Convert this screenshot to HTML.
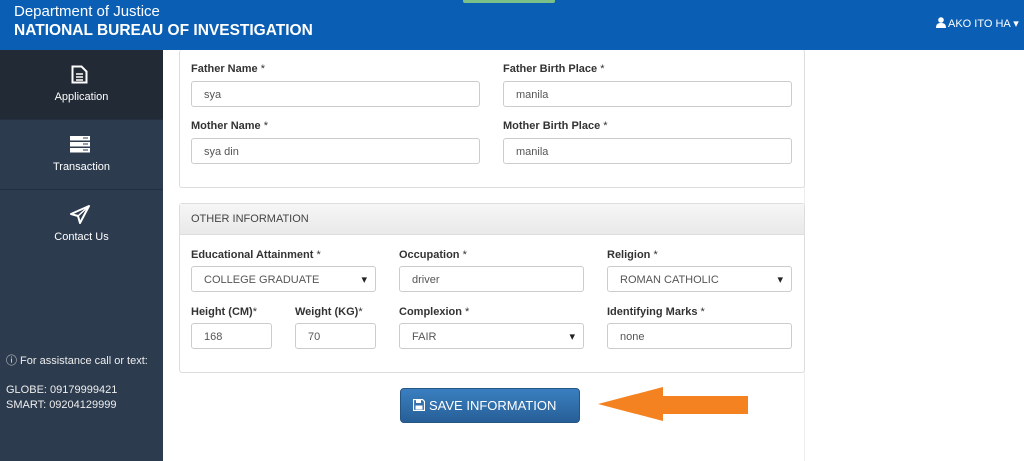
<!DOCTYPE html>
<html><head><style>
*{box-sizing:border-box;margin:0;padding:0}
body{width:1024px;height:461px;overflow:hidden;background:#fff;font-family:"Liberation Sans",Arial,sans-serif;position:relative}
.hdr{position:absolute;left:0;top:0;width:1024px;height:50px;background:#0a5fb5;color:#fff;z-index:5}
.a{position:absolute}
.side{position:absolute;left:0;top:50px;width:163px;height:411px;background:#2c3b4e;color:#fff}
.nav{position:absolute;left:0;width:163px;height:70px;text-align:center;font-size:11px;border-bottom:1px solid #24303f}
.lbl{position:absolute;font-size:11px;font-weight:bold;color:#333}
.inp{position:absolute;height:26px;border:1px solid #ccc;border-radius:3px;font-size:11px;color:#555;padding:7px 12px;background:#fff}
.sel::after{content:"▾";position:absolute;right:8px;top:6px;font-size:11px;color:#222}
.card{position:absolute;border:1px solid #ddd;border-radius:3px;background:#fff}
</style></head><body>
<div class="hdr">
<div class="a" style="left:14px;top:3px;font-size:15px">Department of Justice</div>
<div class="a" style="left:14px;top:22px;font-size:15.5px;font-weight:bold">NATIONAL BUREAU OF INVESTIGATION</div>
<div class="a" style="left:463px;top:0;width:92px;height:3px;background:#7cc089;border-radius:0 0 2px 2px"></div>
<svg class="a" style="left:936px;top:17px" width="10" height="11" viewBox="0 0 10 11"><circle cx="5" cy="3" r="2.8" fill="#fff"/><path d="M0 11C0 7 2 6 5 6S10 7 10 11z" fill="#fff"/></svg>
<div class="a" style="left:948px;top:17px;font-size:11px">AKO ITO HA ▾</div>
</div>
<div class="side">
<div class="nav" style="top:0;background:#222a35">
<svg class="a" style="left:71px;top:15px" width="17" height="19" viewBox="0 0 17 19"><path d="M1.5 1.5h9l5 5v11h-14z" fill="none" stroke="#fff" stroke-width="2"/><path d="M5 9h7M5 12h7M5 15h7" stroke="#fff" stroke-width="1.5"/></svg>
<div class="a" style="left:0;width:163px;top:41px">Application</div></div>
<div class="nav" style="top:70px">
<svg class="a" style="left:70px;top:16px" width="20" height="17" viewBox="0 0 20 17"><rect x="0" y="0" width="20" height="4.5" fill="#fff"/><rect x="0" y="6" width="20" height="4.5" fill="#fff"/><rect x="0" y="12" width="20" height="4.5" fill="#fff"/><path d="M13 2h5M13 8h5M13 14h5" stroke="#2c3b4e" stroke-width="1"/></svg>
<div class="a" style="left:0;width:163px;top:41px">Transaction</div></div>
<div class="nav" style="top:140px;border:0">
<svg class="a" style="left:70px;top:15px" width="20" height="19" viewBox="0 0 20 19"><path d="M19 1L1 9l7 2 2 7z" fill="none" stroke="#fff" stroke-width="2" stroke-linejoin="round"/><path d="M8 11L19 1" stroke="#fff" stroke-width="1.5"/></svg>
<div class="a" style="left:0;width:163px;top:41px">Contact Us</div></div>
<div class="a" style="left:6px;top:302px;font-size:11px;color:#eee">&#9432; For assistance call or text:</div>
<div class="a" style="left:6px;top:333px;font-size:11px;color:#eee;line-height:15px">GLOBE: 09179999421<br>SMART: 09204129999</div>
</div>
<div class="a" style="left:804px;top:50px;width:1px;height:411px;background:#eee"></div>
<div class="card" style="left:179px;top:50px;width:626px;height:138px;border-top:0"></div>
<div class="lbl" style="left:191px;top:63px">Father Name <span style="font-weight:normal">*</span></div>
<div class="inp" style="left:191px;top:81px;width:289px">sya</div>
<div class="lbl" style="left:503px;top:63px">Father Birth Place <span style="font-weight:normal">*</span></div>
<div class="inp" style="left:503px;top:81px;width:289px">manila</div>
<div class="lbl" style="left:191px;top:120px">Mother Name <span style="font-weight:normal">*</span></div>
<div class="inp" style="left:191px;top:138px;width:289px">sya din</div>
<div class="lbl" style="left:503px;top:120px">Mother Birth Place <span style="font-weight:normal">*</span></div>
<div class="inp" style="left:503px;top:138px;width:289px">manila</div>
<div class="card" style="left:179px;top:203px;width:626px;height:170px"></div>
<div class="a" style="left:180px;top:204px;width:624px;height:31px;background:linear-gradient(#f6f6f6,#e9e9e9);border-bottom:1px solid #ddd;font-size:11px;color:#444;padding:9px 11px">OTHER INFORMATION</div>
<div class="lbl" style="left:191px;top:249px">Educational Attainment <span style="font-weight:normal">*</span></div>
<div class="inp sel" style="left:191px;top:266px;width:185px">COLLEGE GRADUATE</div>
<div class="lbl" style="left:399px;top:249px">Occupation <span style="font-weight:normal">*</span></div>
<div class="inp" style="left:399px;top:266px;width:185px">driver</div>
<div class="lbl" style="left:607px;top:249px">Religion <span style="font-weight:normal">*</span></div>
<div class="inp sel" style="left:607px;top:266px;width:185px">ROMAN CATHOLIC</div>
<div class="lbl" style="left:191px;top:306px">Height (CM)<span style="font-weight:normal">*</span></div>
<div class="inp" style="left:191px;top:323px;width:81px">168</div>
<div class="lbl" style="left:295px;top:306px">Weight (KG)<span style="font-weight:normal">*</span></div>
<div class="inp" style="left:295px;top:323px;width:81px">70</div>
<div class="lbl" style="left:399px;top:306px">Complexion <span style="font-weight:normal">*</span></div>
<div class="inp sel" style="left:399px;top:323px;width:185px">FAIR</div>
<div class="lbl" style="left:607px;top:306px">Identifying Marks <span style="font-weight:normal">*</span></div>
<div class="inp" style="left:607px;top:323px;width:185px">none</div>
<div class="a" style="left:400px;top:388px;width:180px;height:35px;background:linear-gradient(#3a7fc0,#275f97);border:1px solid #245583;border-radius:4px;color:#fff;font-size:13px;padding:9px 0 0 28px">SAVE INFORMATION</div>
<svg class="a" style="left:413px;top:399px" width="12" height="12" viewBox="0 0 12 12"><path d="M0.5 0.5h9l2 2v9h-11z" fill="none" stroke="#fff" stroke-width="1.2"/><rect x="3" y="1" width="5" height="3" fill="#fff"/><rect x="2.5" y="6.5" width="7" height="4" fill="#fff"/></svg>
<svg class="a" style="left:598px;top:386px" width="152" height="36" viewBox="0 0 152 36"><path d="M0 18L65 1V10H150V28H65V35z" fill="#f58220"/></svg>
</body></html>
